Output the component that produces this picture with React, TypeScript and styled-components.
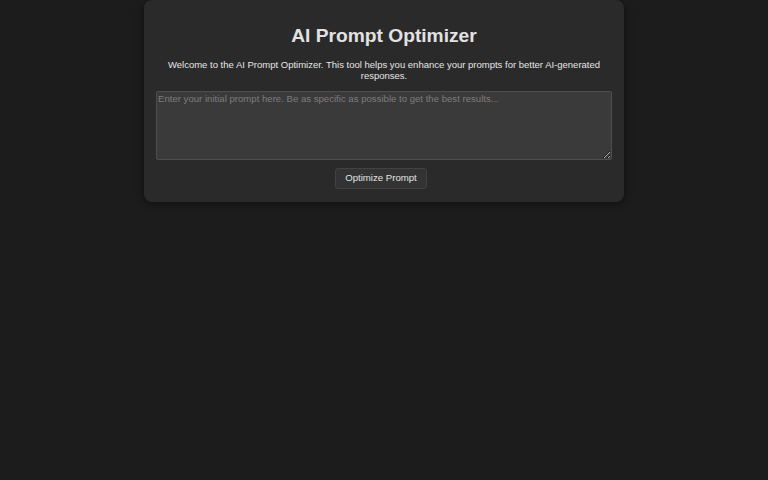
import React from "react";
import styled, { createGlobalStyle } from "styled-components";

const Global = createGlobalStyle`
  html, body { margin: 0; padding: 0; background: #1c1c1c; }
  body { font-family: "Liberation Sans", Arial, sans-serif; color: #e0e0e0; }
`;

const Page = styled.div`
  display: flex;
  justify-content: center;
  min-height: 480px;
`;

const Card = styled.div`
  width: 480px;
  box-sizing: border-box;
  align-self: flex-start;
  background: #2a2a2a;
  border-radius: 8px;
  padding: 22px 12px 12px;
  box-shadow: 0 2px 8px rgba(0, 0, 0, 0.45);
  display: flex;
  flex-direction: column;
  align-items: center;
`;

const Title = styled.h1`
  margin: 0;
  font-size: 19.2px;
  line-height: 28px;
  font-weight: bold;
  color: #e2e2e2;
`;

const Intro = styled.p`
  margin: 9px 0 0;
  font-size: 9.5px;
  line-height: 11px;
  text-align: center;
  color: #e6e6e6;
`;

const PromptBox = styled.textarea`
  margin-top: 10px;
  width: 456px;
  height: 69px;
  box-sizing: border-box;
  background: #3a3a3a;
  border: 1px solid #4e4e4e;
  border-radius: 2px;
  padding: 1px 1px;
  color: #e0e0e0;
  font-family: "Liberation Sans", Arial, sans-serif;
  font-size: 9.6px;
  line-height: 12px;
  resize: vertical;
  outline: none;
  &::placeholder { color: #7c7c7c; }
`;

const Button = styled.button`
  margin: 8px 6px 1px 0;
  width: 92px;
  height: 21px;
  background: #333333;
  border: 1px solid #424242;
  border-radius: 3px;
  color: #e4e4e4;
  font-family: "Liberation Sans", Arial, sans-serif;
  font-size: 9.6px;
  line-height: 12px;
  padding: 0 0 2px;
  cursor: pointer;
`;

export default function App() {
  return (
    <>
      <Global />
      <Page>
        <Card>
          <Title>AI Prompt Optimizer</Title>
          <Intro>
            Welcome to the AI Prompt Optimizer. This tool helps you enhance your prompts for better AI-generated
            responses.
          </Intro>
          <PromptBox placeholder="Enter your initial prompt here. Be as specific as possible to get the best results..." />
          <Button>Optimize Prompt</Button>
        </Card>
      </Page>
    </>
  );
}
